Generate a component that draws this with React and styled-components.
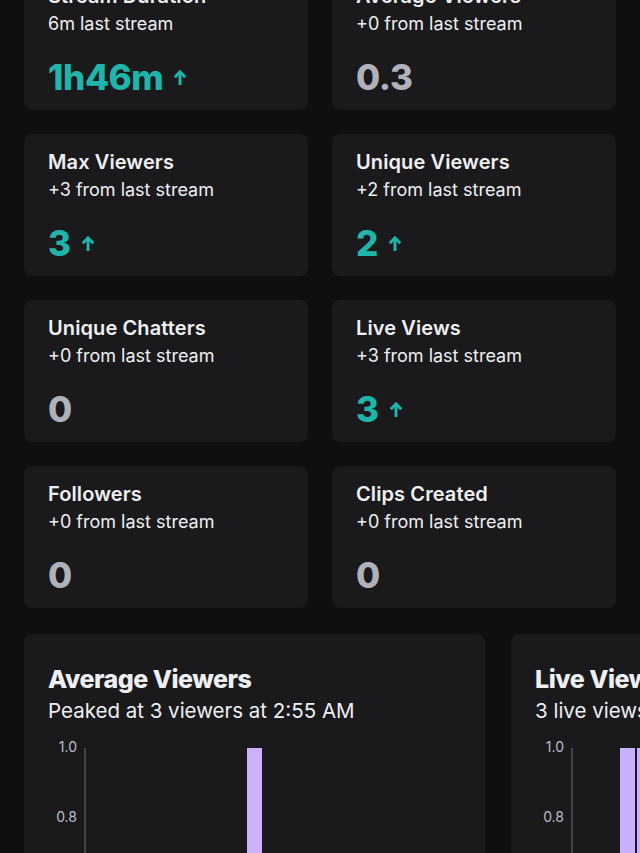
import React from "react";
import styled, { createGlobalStyle } from "styled-components";

const GlobalStyle = createGlobalStyle`
  html, body {
    margin: 0;
    padding: 0;
    background: #0f0f11;
    overflow: hidden;
  }
  body {
    font-family: Inter, "Noto Sans", "Liberation Sans", sans-serif;
    color: #efeff1;
  }
`;

const Page = styled.div`
  display: flex;
  flex-direction: column;
  gap: 26px;
  padding: 0 24px;
  margin-top: -32px;
  width: 640px;
  box-sizing: border-box;
`;

const StatGrid = styled.div`
  display: grid;
  grid-template-columns: 284px 284px;
  gap: 24px;
`;

const StatCard = styled.div`
  display: flex;
  flex-direction: column;
  height: 142px;
  box-sizing: border-box;
  padding: 16px 24px 13px;
  background: #1a1a1d;
  border-radius: 8px;
`;

const StatTitle = styled.div`
  font-size: 20px;
  line-height: 24px;
  font-weight: 600;
  letter-spacing: 0.1px;
`;

const StatSub = styled.div`
  margin-top: 4px;
  font-size: 18px;
  line-height: 24px;
  font-weight: 400;
`;

const ValueRow = styled.div`
  margin-top: auto;
  display: flex;
  align-items: center;
  gap: 10px;
`;

const Value = styled.span`
  font-size: 35px;
  line-height: 40px;
  font-weight: 800;
  letter-spacing: -0.4px;
  color: ${(p) => (p.$up ? "#1fb5ab" : "#b1b1b9")};
`;

const ChartRow = styled.div`
  display: flex;
  gap: 26px;
`;

const ChartCard = styled.div`
  flex-shrink: 0;
  width: 461px;
  box-sizing: border-box;
  padding: 29px 24px 24px;
  background: #1a1a1d;
  border-radius: 8px;
`;

const ChartTitle = styled.div`
  font-size: 25px;
  line-height: 32px;
  font-weight: 800;
  letter-spacing: -0.5px;
  white-space: nowrap;
`;

const ChartSub = styled.div`
  margin-top: 3px;
  font-size: 20.5px;
  line-height: 26px;
  white-space: nowrap;
`;

const Plot = styled.svg`
  display: block;
  margin-top: 13px;
  overflow: visible;
`;

const UpArrow = () => (
  <svg width="14" height="17" viewBox="0 0 14 17" fill="none">
    <path d="M7 16V3" stroke="#1fb5ab" strokeWidth="3" />
    <path
      d="M1.8 8.2 7 2.8l5.2 5.4"
      stroke="#1fb5ab"
      strokeWidth="3"
      strokeLinejoin="miter"
    />
  </svg>
);

const stats = [
  { title: "Stream Duration", sub: "6m last stream", value: "1h46m", up: true },
  { title: "Average Viewers", sub: "+0 from last stream", value: "0.3" },
  { title: "Max Viewers", sub: "+3 from last stream", value: "3", up: true },
  { title: "Unique Viewers", sub: "+2 from last stream", value: "2", up: true },
  { title: "Unique Chatters", sub: "+0 from last stream", value: "0" },
  { title: "Live Views", sub: "+3 from last stream", value: "3", up: true },
  { title: "Followers", sub: "+0 from last stream", value: "0" },
  { title: "Clips Created", sub: "+0 from last stream", value: "0" },
];

const ticks = [1.0, 0.8, 0.6, 0.4, 0.2, 0];
const TOP = 11;
const SPAN = 350;
const AXIS_X = 37;

function BarChart({ bars }) {
  return (
    <Plot width="413" height="380">
      {ticks.map((t) => (
        <text
          key={t}
          x={AXIS_X - 8}
          y={TOP + (1 - t) * SPAN}
          textAnchor="end"
          dominantBaseline="middle"
          fontSize="14"
          fill="#bdbdc6"
          fontFamily="Inter, sans-serif"
        >
          {t.toFixed(1)}
        </text>
      ))}
      <line x1={AXIS_X} y1={TOP} x2={AXIS_X} y2={TOP + SPAN} stroke="#6a6a74" strokeWidth="1" />
      {bars.map((b, i) => (
        <rect
          key={i}
          x={b.x}
          y={TOP + (1 - b.v) * SPAN}
          width="15"
          height={b.v * SPAN}
          fill="#cbb0fb"
        />
      ))}
    </Plot>
  );
}

export default function App() {
  return (
    <>
      <GlobalStyle />
      <Page>
        <StatGrid>
          {stats.map((s) => (
            <StatCard key={s.title}>
              <StatTitle>{s.title}</StatTitle>
              <StatSub>{s.sub}</StatSub>
              <ValueRow>
                <Value $up={s.up}>{s.value}</Value>
                {s.up && <UpArrow />}
              </ValueRow>
            </StatCard>
          ))}
        </StatGrid>
        <ChartRow>
          <ChartCard>
            <ChartTitle>Average Viewers</ChartTitle>
            <ChartSub>Peaked at 3 viewers at 2:55 AM</ChartSub>
            <BarChart bars={[{ x: 199, v: 1 }]} />
          </ChartCard>
          <ChartCard>
            <ChartTitle>Live Views</ChartTitle>
            <ChartSub>3 live views</ChartSub>
            <BarChart
              bars={[
                { x: 85, v: 1 },
                { x: 102, v: 1 },
                { x: 119, v: 1 },
              ]}
            />
          </ChartCard>
        </ChartRow>
      </Page>
    </>
  );
}
